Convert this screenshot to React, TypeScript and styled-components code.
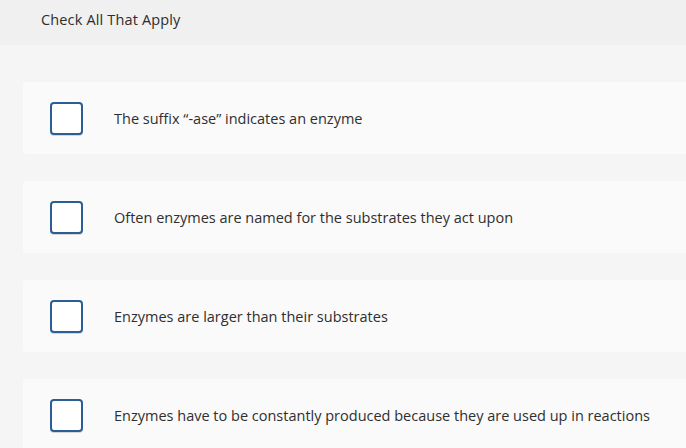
import styled, {createGlobalStyle} from "styled-components";

const GlobalStyle = createGlobalStyle`
  html, body {
    margin: 0;
    padding: 0;
    background: #f5f5f5;
    font-family: "Open Sans", "Liberation Sans", sans-serif;
  }
`;

const Wrapper = styled.div`
  width: 686px;
  height: 448px;
  overflow: hidden;
  background: #f5f5f5;
`;
const Header = styled.div`
  height: 45px;
  display: flex;
  align-items: center;
  padding: 0 0 7px 41px;
  box-sizing: border-box;
  background: #f0f0f0;
  color: #2d2d2d;
  font-size: 14.5px;
  letter-spacing: 0.15px;
`;
const List = styled.div`
  display: flex;
  flex-direction: column;
  gap: 27px;
  padding: 37px 0 0 23px;
`;
const Option = styled.label`
  display: flex;
  align-items: center;
  height: 72px;
  padding-left: 27px;
  gap: 31px;
  background: #fafafa;
  border-radius: 3px 0 0 3px;
  cursor: pointer;
`;
const Box = styled.span`
  width: 33px;
  height: 33px;
  box-sizing: border-box;
  flex-shrink: 0;
  border: 2px solid #2a5e94;
  border-radius: 4px;
  background: #fff;
  box-shadow: 0 1px 0 rgba(0, 0, 0, 0.15);
`;
const Label = styled.span`
  color: #2f2f2f;
  font-size: 14.5px;
  white-space: nowrap;
`;

const options = [
    "The suffix \u201c-ase\u201d indicates an enzyme",
    "Often enzymes are named for the substrates they act upon",
    "Enzymes are larger than their substrates",
    "Enzymes have to be constantly produced because they are used up in reactions",
];

function App() {
    return (
        <Wrapper>
            <GlobalStyle/>
            <Header>Check All That Apply</Header>
            <List>
                {options.map(text => (
                    <Option key={text}>
                        <Box/>
                        <Label>{text}</Label>
                    </Option>
                ))}
            </List>
        </Wrapper>
    );
}

export default App;
